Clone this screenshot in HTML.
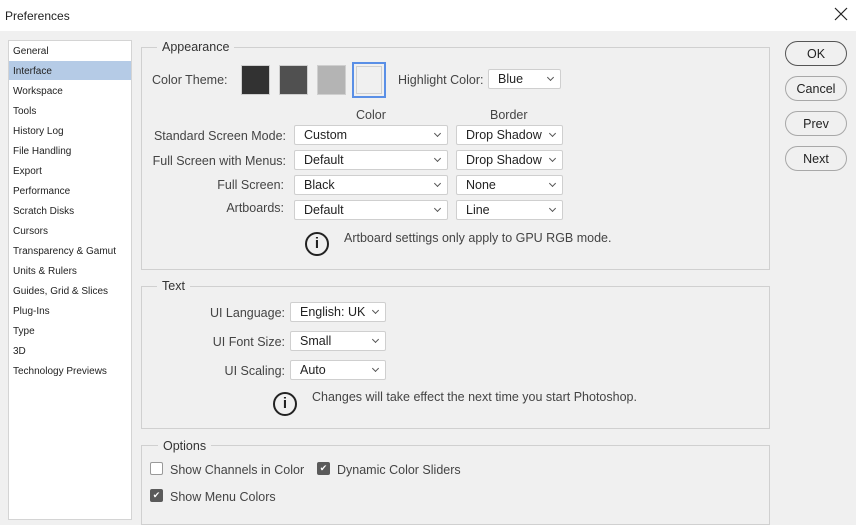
<!DOCTYPE html>
<html><head><style>
*{box-sizing:border-box;margin:0;padding:0}
body{width:856px;height:513px;overflow:hidden;background:#f0f0f0;font-family:"Liberation Sans",sans-serif;font-size:12px;color:#222;position:relative}
.a{position:absolute;white-space:nowrap}
.title{left:0;top:0;width:856px;height:31px;background:#fff}
.side{left:8px;top:40px;width:124px;height:480px;background:#fff;border:1px solid #d4d4d4}
.si{position:absolute;left:4px;font-size:10px;color:#222}
.grp{position:absolute;border:1px solid #d0d0d0}
.lg{position:absolute;background:#f0f0f0;padding:0 5px;font-size:12.5px;color:#333}
.dd{position:absolute;background:#fff;border:1px solid #cfcfcf;border-radius:2px;height:20px;padding-left:9px;line-height:19px;font-size:12.5px}
.dd:after{content:"";position:absolute;right:7px;top:5px;width:4px;height:4px;border-right:1px solid #555;border-bottom:1px solid #555;transform:rotate(45deg)}
.lb{position:absolute;text-align:right;font-size:12.5px;color:#444;white-space:nowrap}
.btn{position:absolute;left:785px;width:62px;height:25px;border:1px solid #a8a8a8;border-radius:13px;text-align:center;line-height:24px;font-size:12.5px}
.sw{position:absolute;top:65px;width:29px;height:30px;border:1px solid #cfcfcf}
.info{position:absolute;width:24px;height:24px;border:2px solid #222;border-radius:50%;text-align:center;font-weight:bold;font-size:15px;line-height:20px}
.cb{position:absolute;width:13px;height:13px;border-radius:2px}
</style></head><body>
<div class="a title"></div>
<div class="a" style="left:5px;top:9px;font-size:12px">Preferences</div>
<svg class="a" style="left:834px;top:7px" width="14" height="14"><path d="M1 1L13 13M13 1L1 13" stroke="#222" stroke-width="1.2"/></svg>
<div class="a side">
<div class="a" style="left:0;top:20px;width:122px;height:19px;background:#b5cbe6"></div>
<div class="si" style="top:5px">General</div>
<div class="si" style="top:25px">Interface</div>
<div class="si" style="top:45px">Workspace</div>
<div class="si" style="top:65px">Tools</div>
<div class="si" style="top:85px">History Log</div>
<div class="si" style="top:105px">File Handling</div>
<div class="si" style="top:125px">Export</div>
<div class="si" style="top:145px">Performance</div>
<div class="si" style="top:165px">Scratch Disks</div>
<div class="si" style="top:185px">Cursors</div>
<div class="si" style="top:205px">Transparency &amp; Gamut</div>
<div class="si" style="top:225px">Units &amp; Rulers</div>
<div class="si" style="top:245px">Guides, Grid &amp; Slices</div>
<div class="si" style="top:265px">Plug-Ins</div>
<div class="si" style="top:285px">Type</div>
<div class="si" style="top:305px">3D</div>
<div class="si" style="top:325px">Technology Previews</div>
</div>

<div class="grp" style="left:141px;top:47px;width:629px;height:223px"></div>
<div class="lg" style="left:157px;top:40px">Appearance</div>
<div class="lb" style="left:152px;top:73px">Color Theme:</div>
<div class="sw" style="left:241px;background:#323232"></div>
<div class="sw" style="left:279px;background:#505050"></div>
<div class="sw" style="left:317px;background:#b4b4b4"></div>
<div class="a" style="left:352px;top:62px;width:34px;height:36px;border:2px solid #5a8fe6;background:#f0f0f0"><div style="margin:2px;height:28px;border:1px solid #d0d0d0"></div></div>
<div class="lb" style="left:398px;top:73px">Highlight Color:</div>
<div class="dd" style="left:488px;top:69px;width:73px">Blue</div>
<div class="lb" style="left:356px;top:108px">Color</div>
<div class="lb" style="left:490px;top:108px">Border</div>
<div class="lb" style="left:120px;width:166px;top:129px">Standard Screen Mode:</div>
<div class="lb" style="left:120px;width:166px;top:154px">Full Screen with Menus:</div>
<div class="lb" style="left:120px;width:164px;top:178px">Full Screen:</div>
<div class="lb" style="left:120px;width:164px;top:201px">Artboards:</div>
<div class="dd" style="left:294px;top:125px;width:154px">Custom</div>
<div class="dd" style="left:294px;top:150px;width:154px">Default</div>
<div class="dd" style="left:294px;top:175px;width:154px">Black</div>
<div class="dd" style="left:294px;top:200px;width:154px">Default</div>
<div class="dd" style="left:456px;top:125px;width:107px">Drop Shadow</div>
<div class="dd" style="left:456px;top:150px;width:107px">Drop Shadow</div>
<div class="dd" style="left:456px;top:175px;width:107px">None</div>
<div class="dd" style="left:456px;top:200px;width:107px">Line</div>
<div class="info" style="left:305px;top:232px">i</div>
<div class="lb" style="left:344px;top:231px">Artboard settings only apply to GPU RGB mode.</div>

<div class="grp" style="left:141px;top:286px;width:629px;height:143px"></div>
<div class="lg" style="left:157px;top:279px">Text</div>
<div class="lb" style="left:150px;width:135px;top:306px">UI Language:</div>
<div class="lb" style="left:150px;width:135px;top:335px">UI Font Size:</div>
<div class="lb" style="left:150px;width:135px;top:364px">UI Scaling:</div>
<div class="dd" style="left:290px;top:302px;width:96px">English: UK</div>
<div class="dd" style="left:290px;top:331px;width:96px">Small</div>
<div class="dd" style="left:290px;top:360px;width:96px">Auto</div>
<div class="info" style="left:273px;top:392px">i</div>
<div class="lb" style="left:312px;top:390px">Changes will take effect the next time you start Photoshop.</div>

<div class="grp" style="left:141px;top:445px;width:629px;height:80px"></div>
<div class="lg" style="left:158px;top:439px">Options</div>
<div class="cb" style="left:150px;top:462px;border:1px solid #999;background:#fff"></div>
<div class="lb" style="left:170px;top:463px">Show Channels in Color</div>
<div class="cb" style="left:317px;top:462px;background:#5a5a5a;color:#fff;font-size:9px;text-align:center;line-height:13px">✔</div>
<div class="lb" style="left:337px;top:463px">Dynamic Color Sliders</div>
<div class="cb" style="left:150px;top:489px;background:#5a5a5a;color:#fff;font-size:9px;text-align:center;line-height:13px">✔</div>
<div class="lb" style="left:170px;top:490px">Show Menu Colors</div>

<div class="btn" style="top:41px;border-color:#555">OK</div>
<div class="btn" style="top:76px">Cancel</div>
<div class="btn" style="top:111px">Prev</div>
<div class="btn" style="top:146px">Next</div>
</body></html>
